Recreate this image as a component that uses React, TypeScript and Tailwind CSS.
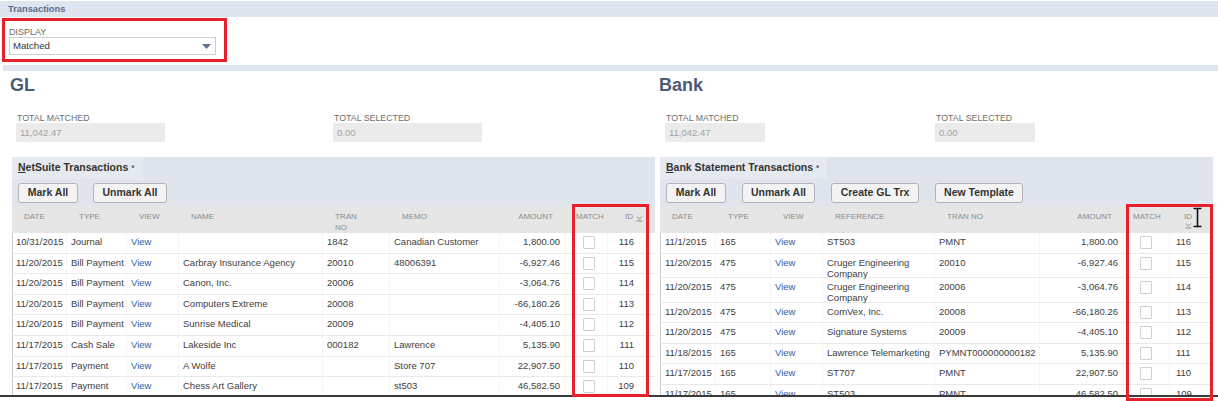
import React from "react";

type LRow = [string, string, string, string, string, string, string, string];
type RRow = [string, string, string, string, string, string, string];

const leftRows: LRow[] = [
  ["10/31/2015", "Journal", "View", "", "1842", "Canadian Customer", "1,800.00", "116"],
  ["11/20/2015", "Bill Payment", "View", "Carbray Insurance Agency", "20010", "48006391", "-6,927.46", "115"],
  ["11/20/2015", "Bill Payment", "View", "Canon, Inc.", "20006", "", "-3,064.76", "114"],
  ["11/20/2015", "Bill Payment", "View", "Computers Extreme", "20008", "", "-66,180.26", "113"],
  ["11/20/2015", "Bill Payment", "View", "Sunrise Medical", "20009", "", "-4,405.10", "112"],
  ["11/17/2015", "Cash Sale", "View", "Lakeside Inc", "000182", "Lawrence", "5,135.90", "111"],
  ["11/17/2015", "Payment", "View", "A Wolfe", "", "Store 707", "22,907.50", "110"],
  ["11/17/2015", "Payment", "View", "Chess Art Gallery", "", "st503", "46,582.50", "109"],
];

const rightRows: RRow[] = [
  ["11/1/2015", "165", "View", "ST503", "PMNT", "1,800.00", "116"],
  ["11/20/2015", "475", "View", "Cruger Engineering Company", "20010", "-6,927.46", "115"],
  ["11/20/2015", "475", "View", "Cruger Engineering Company", "20006", "-3,064.76", "114"],
  ["11/20/2015", "475", "View", "ComVex, Inc.", "20008", "-66,180.26", "113"],
  ["11/20/2015", "475", "View", "Signature Systems", "20009", "-4,405.10", "112"],
  ["11/18/2015", "165", "View", "Lawrence Telemarketing", "PYMNT000000000182", "5,135.90", "111"],
  ["11/17/2015", "165", "View", "ST707", "PMNT", "22,907.50", "110"],
  ["11/17/2015", "165", "View", "ST503", "PMNT", "46,582.50", "109"],
];

const rightHeights = [
  "h-[20.6px]",
  "h-[24.5px]",
  "h-[24.5px]",
  "h-[20.6px]",
  "h-[20.6px]",
  "h-[20.6px]",
  "h-[20.6px]",
  "h-[20.6px]",
];

function Checkbox() {
  return <div className="w-[12px] h-[13px] border border-[#cfcfcf] bg-white rounded-[1px]" />;
}

function SortIcon() {
  return (
    <svg width="7" height="7" viewBox="0 0 7 7" className="inline-block">
      <path d="M1 1.5 L3.5 4.2 L6 1.5" fill="none" stroke="#8a8a8a" strokeWidth="1" />
      <path d="M0.5 6 H6.5" stroke="#8a8a8a" strokeWidth="1" />
    </svg>
  );
}

function Btn({ label, w }: { label: string; w: string }) {
  return (
    <div
      className={`${w} h-[20px] rounded-[3px] border border-[#b3b3b3] bg-[#f3f3f3] flex items-center justify-center text-[10.5px] font-bold text-[#333]`}
    >
      {label}
    </div>
  );
}

function Field({ label, value, w, className }: { label: string; value: string; w: string; className?: string }) {
  return (
    <div className={className}>
      <div className="pl-[1px] text-[8.8px] leading-[10px] text-[#6e6e6e] whitespace-nowrap">{label}</div>
      <div className={`${w} h-[19px] bg-[#ebebeb] pl-[4px] text-[9.5px] leading-[19px] text-[#a3a3a3]`}>{value}</div>
    </div>
  );
}

function PanelHead({ title, first, children }: { title: string; first: string; children: React.ReactNode }) {
  return (
    <>
      <div className="h-[22px] flex">
        <div className="bg-[#e5e9f0] pl-[6px] pr-[8px] flex items-center text-[10.5px] font-bold text-[#333] whitespace-nowrap">
          <span>
            <span className="underline">{first}</span>
            {title}
          </span>
          <span className="ml-[3px] text-[#666] text-[9px]">•</span>
        </div>
      </div>
      <div className="h-[27px] pt-[3.5px] pl-[6px] flex">{children}</div>
    </>
  );
}

const leftCols = "grid-cols-[54px_60px_52px_144px_67px_110px_66px_42px_35px_12px]";
const rightCols = "grid-cols-[55px_55px_52px_112px_105px_84px_46px_43px]";
const sep = "border-r border-r-[#f5f5f5]";

export default function App() {
  return (
    <div className="relative w-[1218px] h-[401px] overflow-hidden bg-white font-['Liberation_Sans',Arial,sans-serif]">
      {/* Top bar */}
      <div className="mt-[1px] h-[16px] bg-[#dfe5ee] pl-[8px] text-[9.3px] leading-[16px] font-bold text-[#5b6c90]">
        Transactions
      </div>
      {/* Display */}
      <div className="h-[48px] pl-[9px] pt-[9.5px]">
        <div className="text-[9px] leading-[10px] text-[#6b6b6b]">DISPLAY</div>
        <div className="mt-[0.5px] w-[207px] h-[18px] border border-[#cfcfcf] bg-white flex items-center justify-between pl-[3px] pr-[4px]">
          <span className="text-[9.6px] text-[#333]">Matched</span>
          <svg width="9" height="5" viewBox="0 0 9 5">
            <path d="M0 0 H9 L4.5 5 Z" fill="#5e6f91" />
          </svg>
        </div>
      </div>
      <div className="ml-[3px] h-[6px] bg-[#dfe5ee]" />

      <div className="flex">
        {/* GL */}
        <div className="w-[655px]">
          <div className="pt-[4px] pl-[10px] text-[18px] leading-[21px] font-bold text-[#4b5a78]">GL</div>
          <div className="mt-[17px] flex pl-[16px]">
            <Field label="TOTAL MATCHED" value="11,042.47" w="w-[149px]" />
            <Field label="TOTAL SELECTED" value="0.00" w="w-[149px]" className="ml-[168px]" />
          </div>
          <div className="mt-[15px] ml-[12px] w-[643px]">
            <div className="bg-[#dfe4ed]">
              <PanelHead first="N" title="etSuite Transactions">
                <Btn label="Mark All" w="w-[60px]" />
                <Btn label="Unmark All" w="w-[74px] ml-[15px]" />
              </PanelHead>
              <div className={`grid ${leftCols} h-[27px] bg-[#e6e6e6] border-l border-l-[#e6e6e6] text-[8px] leading-[11px] text-[#8b8b8b]`}>
                <div className="pl-[11px] pt-[5px]">DATE</div>
                <div className="pl-[12px] pt-[5px]">TYPE</div>
                <div className="pl-[12px] pt-[5px]">VIEW</div>
                <div className="pl-[12px] pt-[5px]">NAME</div>
                <div className="pl-[12px] pt-[5px]">
                  TRAN
                  <br />
                  NO
                </div>
                <div className="pl-[12px] pt-[5px]">MEMO</div>
                <div className="pr-[13px] pt-[5px] text-right">AMOUNT</div>
                <div className="pl-[10px] pt-[5px]">MATCH</div>
                <div className="pt-[5px] flex justify-end gap-[3px]">
                  <span>ID</span>
                  <span className="pt-[2px]">
                    <SortIcon />
                  </span>
                </div>
                <div />
              </div>
            </div>
            {leftRows.map((r, i) => (
              <div
                key={i}
                className={`grid ${leftCols} h-[20.6px] border-l border-l-[#c9c9c9] border-b border-b-[#e9e9e9] text-[9.5px] leading-[11px] text-[#404040] whitespace-nowrap`}
              >
                <div className={`pl-[3px] pt-[3px] ${sep}`}>{r[0]}</div>
                <div className={`pl-[4px] pt-[3px] ${sep}`}>{r[1]}</div>
                <div className={`pl-[4px] pt-[3px] text-[#2f5fa6] ${sep}`}>{r[2]}</div>
                <div className={`pl-[4px] pt-[3px] ${sep}`}>{r[3]}</div>
                <div className={`pl-[4px] pt-[3px] ${sep}`}>{r[4]}</div>
                <div className={`pl-[4px] pt-[3px] ${sep}`}>{r[5]}</div>
                <div className={`pr-[5px] pt-[3px] text-right ${sep}`}>{r[6]}</div>
                <div className={`pl-[17px] pt-[3px] ${sep}`}>
                  <Checkbox />
                </div>
                <div className="pr-[9px] pt-[3px] text-right">{r[7]}</div>
                <div />
              </div>
            ))}
          </div>
        </div>

        {/* Bank */}
        <div className="w-[563px]">
          <div className="pt-[4px] pl-[4px] text-[18px] leading-[21px] font-bold text-[#4b5a78]">Bank</div>
          <div className="mt-[17px] flex pl-[10px]">
            <Field label="TOTAL MATCHED" value="11,042.47" w="w-[100px]" />
            <Field label="TOTAL SELECTED" value="0.00" w="w-[100px]" className="ml-[170px]" />
          </div>
          <div className="mt-[15px] ml-[5px] w-[553px]">
            <div className="bg-[#dfe4ed]">
              <PanelHead first="B" title="ank Statement Transactions">
                <Btn label="Mark All" w="w-[60px]" />
                <Btn label="Unmark All" w="w-[73px] ml-[16px]" />
                <Btn label="Create GL Trx" w="w-[88px] ml-[16px]" />
                <Btn label="New Template" w="w-[88px] ml-[16px]" />
              </PanelHead>
              <div className={`grid ${rightCols} h-[27px] bg-[#e6e6e6] border-l border-l-[#e6e6e6] text-[8px] leading-[11px] text-[#8b8b8b]`}>
                <div className="pl-[11px] pt-[5px]">DATE</div>
                <div className="pl-[12px] pt-[5px]">TYPE</div>
                <div className="pl-[12px] pt-[5px]">VIEW</div>
                <div className="pl-[12px] pt-[5px]">REFERENCE</div>
                <div className="pl-[12px] pt-[5px]">TRAN NO</div>
                <div className="pr-[12px] pt-[5px] text-right">AMOUNT</div>
                <div className="pl-[9px] pt-[5px]">MATCH</div>
                <div className="relative pl-[14px] pt-[5px]">
                  <div>ID</div>
                  <div className="pl-[1px] -mt-[2px]">
                    <SortIcon />
                  </div>
                  <svg
                    width="11"
                    height="21"
                    viewBox="0 0 11 21"
                    className="absolute left-[22px] top-[1px]"
                  >
                    <path d="M1.5 1.5 H9.5 M5.5 1.5 V19.5 M1.5 19.5 H9.5" stroke="#111" strokeWidth="1.6" fill="none" />
                  </svg>
                </div>
              </div>
            </div>
            {rightRows.map((r, i) => (
              <div
                key={i}
                className={`grid ${rightCols} ${rightHeights[i]} border-l border-l-[#c9c9c9] border-b border-b-[#e9e9e9] text-[9.5px] leading-[11px] text-[#404040]`}
              >
                <div className={`pl-[4px] pt-[3px] whitespace-nowrap ${sep}`}>{r[0]}</div>
                <div className={`pl-[4px] pt-[3px] ${sep}`}>{r[1]}</div>
                <div className={`pl-[4px] pt-[3px] text-[#2f5fa6] ${sep}`}>{r[2]}</div>
                <div className={`pl-[4px] pt-[3px] ${sep}`}>{r[3]}</div>
                <div className={`pl-[4px] pt-[3px] whitespace-nowrap ${sep}`}>{r[4]}</div>
                <div className={`pr-[5px] pt-[3px] text-right whitespace-nowrap ${sep}`}>{r[5]}</div>
                <div className={`pl-[16px] pt-[3px] ${sep}`}>
                  <Checkbox />
                </div>
                <div className="pl-[6px] pt-[3px]">{r[6]}</div>
              </div>
            ))}
          </div>
        </div>
      </div>

      {/* bottom edge */}
      <div className="absolute left-0 top-[395px] w-[1218px] h-[6px] bg-white border-t-2 border-t-[#3a3a3a]" />

      {/* red annotation boxes */}
      <div className="absolute left-[2px] top-[18px] w-[225px] h-[44px] border-[3px] border-[#e8202a]" />
      <div className="absolute left-[572px] top-[204px] w-[77px] h-[193px] border-[3px] border-[#e8202a]" />
      <div className="absolute left-[1126px] top-[204px] w-[87px] h-[197px] border-[3px] border-[#e8202a]" />
    </div>
  );
}
